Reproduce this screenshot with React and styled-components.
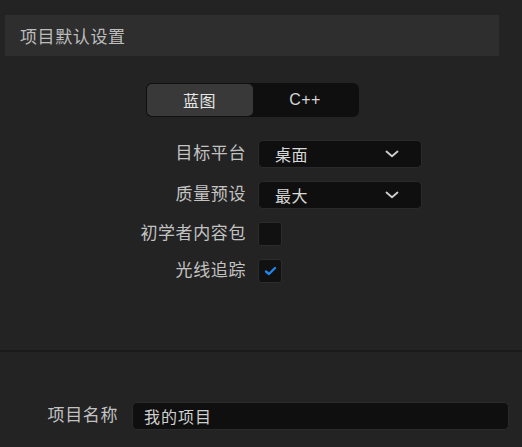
import styled, { createGlobalStyle } from 'styled-components'

const GlobalStyle = createGlobalStyle`
  html, body {
    margin: 0;
    padding: 0;
    background: #232323;
  }
  body {
    font-family: "Liberation Sans", "Noto Sans CJK SC", sans-serif;
    color: #c4c4c4;
  }
`

const Page = styled.div`
  width: 522px;
  height: 447px;
  overflow: hidden;
  display: flex;
  flex-direction: column;
`

const Settings = styled.div`
  width: 494px;
  margin-left: 5px;
  padding-top: 15px;
  display: flex;
  flex-direction: column;
  align-items: center;
`

const Header = styled.div`
  align-self: stretch;
  height: 41px;
  background: #2e2e2e;
  display: flex;
  align-items: center;
  padding-left: 15px;
  font-size: 17px;
  letter-spacing: 0.6px;
  color: #bdbdbd;
`

const Toggle = styled.div`
  margin-top: 27px;
  width: 213px;
  height: 34px;
  box-sizing: border-box;
  padding: 1px;
  background: #0f0f0f;
  border-radius: 6px;
  display: grid;
  grid-template-columns: 106px 1fr;
`

const Segment = styled.div`
  display: flex;
  align-items: center;
  justify-content: center;
  border-radius: 5px;
  font-size: 16px;
  letter-spacing: 0.5px;
  background: ${(p) => (p.$active ? '#393939' : 'transparent')};
  color: ${(p) => (p.$active ? '#e6e6e6' : '#d6d6d6')};
`

const Form = styled.div`
  align-self: stretch;
  margin-top: 23px;
  margin-left: -5px;
  display: grid;
  grid-template-columns: 246px 164px;
  column-gap: 12px;
  row-gap: 13px;
  align-items: center;
`

const Label = styled.div`
  text-align: right;
  font-size: 17px;
  line-height: 24px;
  letter-spacing: 0.6px;
  color: #c2c2c2;
`

const Select = styled.div`
  height: 28px;
  box-sizing: border-box;
  background: #0f0f0f;
  border: 1px solid #2a2a2a;
  border-radius: 5px;
  display: flex;
  align-items: center;
  justify-content: space-between;
  padding: 0 22px 0 16px;
  font-size: 16px;
  letter-spacing: 0.6px;
  color: #d8d8d8;
`

const Check = styled.div`
  width: 24px;
  height: 24px;
  box-sizing: border-box;
  background: #111;
  border: 1px solid #2c2c2c;
  border-radius: 3px;
  display: flex;
  align-items: center;
  justify-content: center;
`

const Divider = styled.div`
  margin-top: 67px;
  height: 2px;
  background: #1a1a1a;
`

const NameRow = styled.div`
  margin-top: 50px;
  display: grid;
  grid-template-columns: 118px 1fr;
  column-gap: 14px;
  padding-right: 13px;
  align-items: center;
`

const Input = styled.div`
  height: 28px;
  box-sizing: border-box;
  background: #0f0f0f;
  border: 1px solid #2a2a2a;
  border-radius: 5px;
  display: flex;
  align-items: center;
  padding-left: 11px;
  font-size: 16px;
  letter-spacing: 1px;
  color: #d0d0d0;
`

const Chevron = () => (
  <svg width="14" height="8" viewBox="0 0 14 8">
    <polyline points="1.5,1.5 7,6.2 12.5,1.5" fill="none" stroke="#d0d0d0" strokeWidth="1.8" strokeLinecap="round" strokeLinejoin="round" />
  </svg>
)

const Tick = () => (
  <svg width="13" height="10" viewBox="0 0 13 10">
    <polyline points="2,5.5 5,8 11,2" fill="none" stroke="#1f86ea" strokeWidth="2.4" strokeLinecap="round" strokeLinejoin="round" />
  </svg>
)

const App = () => {
  return (
    <Page>
      <GlobalStyle />
      <Settings>
        <Header>项目默认设置</Header>
        <Toggle>
          <Segment $active>蓝图</Segment>
          <Segment>C++</Segment>
        </Toggle>
        <Form>
          <Label>目标平台</Label>
          <Select>桌面<Chevron /></Select>
          <Label>质量预设</Label>
          <Select>最大<Chevron /></Select>
          <Label>初学者内容包</Label>
          <Check />
          <Label>光线追踪</Label>
          <Check><Tick /></Check>
        </Form>
      </Settings>
      <Divider />
      <NameRow>
        <Label>项目名称</Label>
        <Input>我的项目</Input>
      </NameRow>
    </Page>
  )
}

export default App
